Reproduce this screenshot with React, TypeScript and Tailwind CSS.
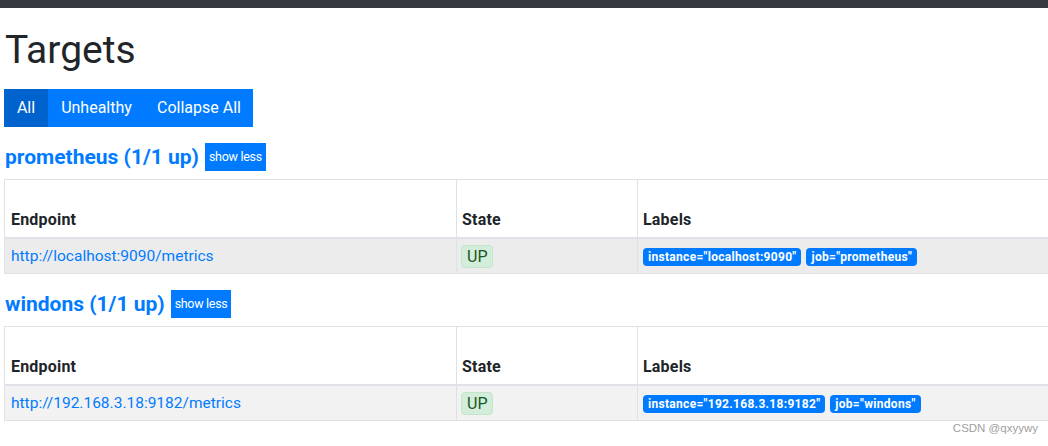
import React from "react";

const FONT = { fontFamily: '"Segoe UI", Roboto, "Noto Sans", sans-serif' };

type Target = {
  job: string;
  endpoint: string;
  labels: string[];
  rowBg: string;
};

const targets: Target[] = [
  {
    job: "prometheus",
    endpoint: "http://localhost:9090/metrics",
    labels: ['instance="localhost:9090"', 'job="prometheus"'],
    rowBg: "bg-[#ececec]",
  },
  {
    job: "windons",
    endpoint: "http://192.168.3.18:9182/metrics",
    labels: ['instance="192.168.3.18:9182"', 'job="windons"'],
    rowBg: "bg-[#f2f2f2]",
  },
];

function Section({ t }: { t: Target }) {
  return (
    <div className="mt-[16px]">
      <div className="flex items-center h-[28px] pl-[1px]">
        <span className="text-[21px] font-bold text-[#007bff] leading-[28px]">
          {t.job} (1/1 up)
        </span>
        <span className="ml-[6px] h-[28px] px-[4px] bg-[#007bff] text-white text-[12.5px] tracking-[-0.3px] leading-[28px]">
          show less
        </span>
      </div>
      <div className="mt-[8px] grid grid-cols-[452px_181px_1fr] border-t border-l border-b border-[#dee2e6]">
        <div className="h-[59px] border-r border-b-2 border-[#dee2e6] flex items-end px-[6px] pb-[5px] font-bold text-[16px] leading-[24px] text-[#212529] tracking-[0.2px]">
          Endpoint
        </div>
        <div className="h-[59px] border-r border-b-2 border-[#dee2e6] flex items-end px-[5px] pb-[5px] font-bold text-[16px] leading-[24px] text-[#212529] tracking-[0.2px]">
          State
        </div>
        <div className="h-[59px] border-b-2 border-[#dee2e6] flex items-end px-[5px] pb-[5px] font-bold text-[16px] leading-[24px] text-[#212529] tracking-[0.2px]">
          Labels
        </div>
        <div className={`${t.rowBg} h-[34px] border-r border-[#dee2e6] flex items-center px-[6px] pt-[2px] text-[15.5px] text-[#007bff]`}>
          {t.endpoint}
        </div>
        <div className={`${t.rowBg} h-[34px] border-r border-[#dee2e6] flex items-center px-[4px]`}>
          <span className="h-[23px] px-[5px] rounded-[4px] bg-[#d4edda] border border-[#c3e6cb] text-[#155724] text-[16px] leading-[21px]">
            UP
          </span>
        </div>
        <div className={`${t.rowBg} h-[34px] flex items-center px-[5px] pt-[1px] gap-[5px]`}>
          {t.labels.map((l) => (
            <span
              key={l}
              className="h-[18px] px-[5px] rounded-[4px] bg-[#007bff] text-white text-[12px] font-bold leading-[18px] tracking-[0.3px]"
            >
              {l}
            </span>
          ))}
        </div>
      </div>
    </div>
  );
}

export default function App() {
  return (
    <div className="w-[1048px] h-[446px] bg-white overflow-hidden relative" style={FONT}>
      <div className="h-[8px] bg-[#343a40]" />
      <div className="pl-[4px]">
        <h1 className="mt-[18px] text-[39px] leading-[48px] font-normal text-[#212529] pl-[1px]">Targets</h1>
        <div className="mt-[15px] flex h-[38px] text-white text-[16px] leading-[38px]">
          <span className="w-[44px] text-center bg-[#0062cc]">All</span>
          <span className="w-[97px] text-center bg-[#007bff]">Unhealthy</span>
          <span className="w-[108px] text-center bg-[#007bff]">Collapse All</span>
        </div>
        {targets.map((t) => (
          <Section key={t.job} t={t} />
        ))}
      </div>
      <div className="absolute right-[10px] bottom-[9px] text-[11.5px] text-[#a0a0a0]" style={{ fontFamily: '"Liberation Sans", Arial, sans-serif' }}>
        CSDN @qxyywy
      </div>
    </div>
  );
}
